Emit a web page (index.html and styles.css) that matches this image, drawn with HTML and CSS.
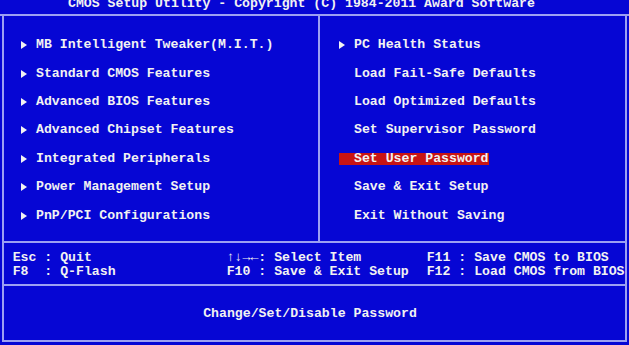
FILE: index.html
```html
<!DOCTYPE html>
<html lang="en">
<head>
<meta charset="utf-8">
<title>CMOS Setup Utility</title>
<link rel="stylesheet" href="styles.css">
</head>
<body>
<div class="title">CMOS Setup Utility - Copyright (C) 1984-2011 Award Software</div>
<div class="frame">
  <div class="menus">
    <ul class="menu menu-left">
      <li class="item"><span class="label"><span class="mark"><svg width="6" height="8" viewBox="0 0 6 8"><polygon points="0,0 6,4 0,8" fill="#f2f2f2"/></svg></span>MB Intelligent Tweaker(M.I.T.)</span></li>
      <li class="item"><span class="label"><span class="mark"><svg width="6" height="8" viewBox="0 0 6 8"><polygon points="0,0 6,4 0,8" fill="#f2f2f2"/></svg></span>Standard CMOS Features</span></li>
      <li class="item"><span class="label"><span class="mark"><svg width="6" height="8" viewBox="0 0 6 8"><polygon points="0,0 6,4 0,8" fill="#f2f2f2"/></svg></span>Advanced BIOS Features</span></li>
      <li class="item"><span class="label"><span class="mark"><svg width="6" height="8" viewBox="0 0 6 8"><polygon points="0,0 6,4 0,8" fill="#f2f2f2"/></svg></span>Advanced Chipset Features</span></li>
      <li class="item"><span class="label"><span class="mark"><svg width="6" height="8" viewBox="0 0 6 8"><polygon points="0,0 6,4 0,8" fill="#f2f2f2"/></svg></span>Integrated Peripherals</span></li>
      <li class="item"><span class="label"><span class="mark"><svg width="6" height="8" viewBox="0 0 6 8"><polygon points="0,0 6,4 0,8" fill="#f2f2f2"/></svg></span>Power Management Setup</span></li>
      <li class="item"><span class="label"><span class="mark"><svg width="6" height="8" viewBox="0 0 6 8"><polygon points="0,0 6,4 0,8" fill="#f2f2f2"/></svg></span>PnP/PCI Configurations</span></li>
    </ul>
    <ul class="menu menu-right">
      <li class="item"><span class="label"><span class="mark"><svg width="6" height="8" viewBox="0 0 6 8"><polygon points="0,0 6,4 0,8" fill="#f2f2f2"/></svg></span>PC Health Status</span></li>
      <li class="item"><span class="label"><span class="mark"></span>Load Fail-Safe Defaults</span></li>
      <li class="item"><span class="label"><span class="mark"></span>Load Optimized Defaults</span></li>
      <li class="item"><span class="label"><span class="mark"></span>Set Supervisor Password</span></li>
      <li class="item"><span class="label selected"><span class="mark"></span>Set User Password</span></li>
      <li class="item"><span class="label"><span class="mark"></span>Save &amp; Exit Setup</span></li>
      <li class="item"><span class="label"><span class="mark"></span>Exit Without Saving</span></li>
    </ul>
  </div>
  <div class="keys">
    <div class="keycol"><div>Esc : Quit</div><div>F8  : Q-Flash</div></div>
    <div class="keycol"><div>↑↓→←: Select Item</div><div>F10 : Save &amp; Exit Setup</div></div>
    <div class="keycol"><div>F11 : Save CMOS to BIOS</div><div>F12 : Load CMOS from BIOS</div></div>
  </div>
  <div class="help">Change/Set/Disable Password</div>
</div>
</body>
</html>
```

FILE: styles.css
```css
* {
  box-sizing: border-box;
  margin: 0;
  padding: 0;
}

html, body {
  width: 629px;
  height: 345px;
  overflow: hidden;
}

body {
  background: #0606d4;
  color: #f2f2f2;
  font-family: "Liberation Mono", "DejaVu Sans Mono", monospace;
  font-weight: bold;
  font-size: 13.2px;
  line-height: 1;
}

.title {
  height: 16px;
  line-height: 8px;
  padding-left: 68px;
  white-space: pre;
  border-bottom: 2px solid #9ca0f2;
}

.frame {
  margin: 0 2px;
  height: 326px;
  border: 2px solid #9ca0f2;
  border-top: 0;
}

.menus {
  display: grid;
  grid-template-columns: 316px 1fr;
  height: 227px;
  border-bottom: 2px solid #9ca0f2;
}

.menu {
  list-style: none;
  padding-top: 15px;
}

.menu-left {
  border-right: 2px solid #9ca0f2;
  padding-left: 17px;
}

.menu-right {
  padding-left: 19px;
}

.item {
  height: 28.4px;
  display: flex;
  align-items: center;
}

.label {
  display: inline-flex;
  align-items: center;
  height: 12px;
  line-height: 12px;
  white-space: pre;
}

.label.selected {
  background: #c81414;
}

.mark {
  width: 15px;
  height: 12px;
  display: inline-flex;
  align-items: center;
}

.mark svg {
  display: block;
}

.keys {
  height: 43px;
  border-bottom: 2px solid #9ca0f2;
  padding: 8px 0 0 8.7px;
  display: grid;
  grid-template-columns: 214px 200px auto;
  line-height: 14px;
  white-space: pre;
}

.help {
  height: 54px;
  line-height: 55px;
  text-align: center;
  padding-right: 9px;
  white-space: pre;
}
```
